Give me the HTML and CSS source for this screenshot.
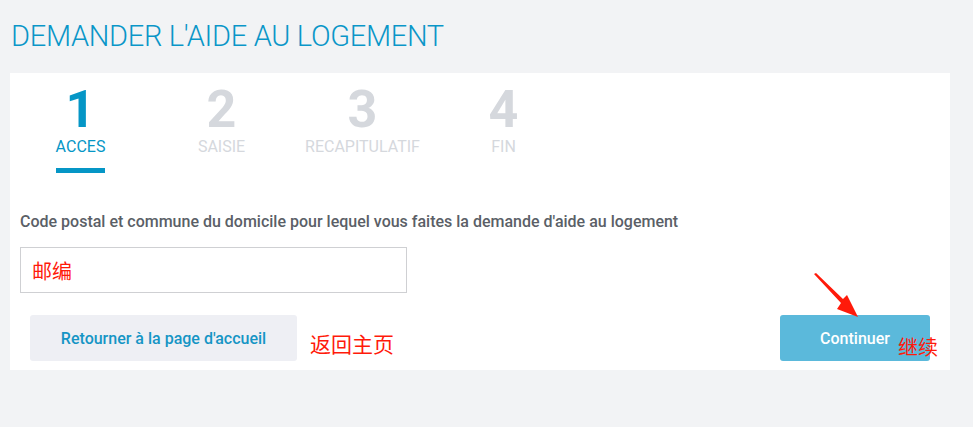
FILE: index.html
```html
<!DOCTYPE html>
<html lang="fr">
<head>
  <meta charset="UTF-8">
  <title>Demander l'aide au logement</title>
  <link rel="stylesheet" href="styles.css">
</head>
<body>
  <h1 class="page-title">DEMANDER L'AIDE AU LOGEMENT</h1>

  <div class="card">
    <!-- Steps -->
    <ul class="steps">
      <li class="step active"><span class="num">1</span><span class="name">ACCES</span></li>
      <li class="step"><span class="num">2</span><span class="name">SAISIE</span></li>
      <li class="step"><span class="num">3</span><span class="name">RECAPITULATIF</span></li>
      <li class="step"><span class="num">4</span><span class="name">FIN</span></li>
    </ul>

    <form class="form">
      <label class="field-label">Code postal et commune du domicile pour lequel vous faites la demande d'aide au logement</label>
      <div class="field"><span class="note">邮编</span></div>

      <div class="actions">
        <div class="back">
          <button type="button" class="btn btn-back">Retourner à la page d'accueil</button>
          <span class="note note-back">返回主页</span>
        </div>
        <div class="next">
          <svg class="arrow" width="50" height="50" viewBox="0 0 50 50">
            <path d="M1 1 L3 0 L30 26 L34 22 L45 44 L24 36 L28 30 Z" fill="#ff1a0a"/>
          </svg>
          <button type="button" class="btn btn-next">Continuer</button>
          <span class="note note-next">继续</span>
        </div>
      </div>
    </form>
  </div>
</body>
</html>
```

FILE: styles.css
```css
body {
  margin: 0;
  padding: 0 23px 0 10px;
  background: #f2f3f5;
  font-family: Roboto, "Liberation Sans", sans-serif;
  height: 427px;
}
.page-title {
  margin: 0;
  padding: 19px 0 0 1px;
  height: 73px;
  box-sizing: border-box;
  font-size: 29px;
  line-height: 34px;
  font-weight: 300;
  color: #0a96c8;
  letter-spacing: -0.3px;
}
.card {
  background: #fff;
  height: 297px;
  box-sizing: border-box;
  padding-top: 10px;
}
.steps {
  list-style: none;
  margin: 0;
  padding: 0;
  display: flex;
}
.step {
  width: 141px;
  display: flex;
  flex-direction: column;
  align-items: center;
  color: #d5d8dd;
}
.step .num {
  font-size: 52px;
  font-weight: 700;
  line-height: 54px;
}
.step .name {
  font-size: 16px;
  line-height: 20px;
  padding-bottom: 11px;
}
.step.active { color: #0596c6; }
.step.active .name {
  border-bottom: 5px solid #0596c6;
}
.form {
  padding: 40px 20px 0 10px;
}
.field-label {
  display: block;
  font-size: 16px;
  font-weight: 500;
  color: #5b5f67;
  line-height: 18px;
}
.field {
  width: 387px;
  height: 46px;
  box-sizing: border-box;
  border: 1px solid #cfd0d3;
  margin-top: 16px;
  padding-left: 11px;
  display: flex;
  align-items: center;
}
.note {
  font-family: "Noto Sans CJK SC", sans-serif;
  color: #ff1a0a;
  font-size: 20px;
  white-space: nowrap;
}
.actions {
  display: flex;
  justify-content: space-between;
  margin-top: 22px;
  padding-left: 10px;
}
.back {
  display: flex;
  align-items: center;
  gap: 13px;
}
.btn {
  height: 46px;
  border: none;
  border-radius: 3px;
  font-family: Roboto, "Liberation Sans", sans-serif;
  font-size: 16px;
  font-weight: 500;
  cursor: pointer;
}
.btn-back {
  width: 267px;
  background: #eeeff4;
  color: #1595c5;
}
.note-back {
  font-size: 21px;
  margin-top: 10px;
}
.next {
  position: relative;
}
.btn-next {
  width: 150px;
  background: #5bb9db;
  color: #fff;
}
.arrow {
  position: absolute;
  left: 33px;
  top: -42px;
}
.note-next {
  position: absolute;
  left: 118px;
  top: 17px;
}
```
